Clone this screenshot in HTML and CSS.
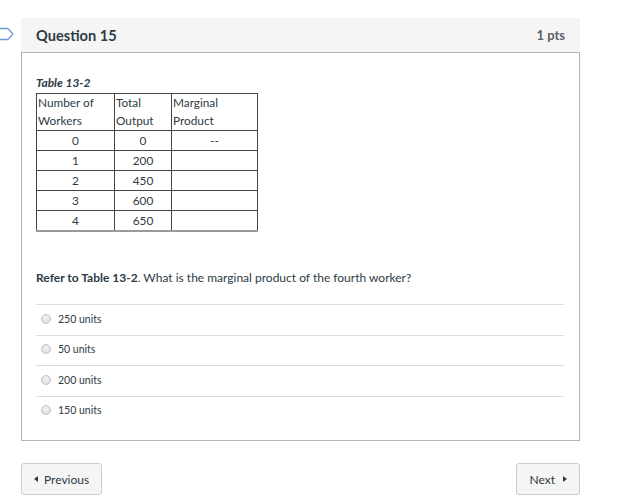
FILE: index.html
```html
<!DOCTYPE html>
<html>
<head>
<meta charset="utf-8">
<link rel="stylesheet" href="styles.css">
</head>
<body>
<div class="page">
  <svg class="flag" width="14" height="14" viewBox="0 0 14 14"><path d="M-6 1.5 H7 Q8 1.5 8.7 2.3 L12.3 6.2 Q13 7 12.3 7.8 L8.7 11.7 Q8 12.5 7 12.5 H-6" fill="none" stroke="#6b9bd6" stroke-width="1.3"/></svg>
  <div class="card">
    <div class="card-head">
      <span class="q-title">Question 15</span>
      <span class="q-pts">1 pts</span>
    </div>
    <div class="card-body">
      <div class="tbl-title">Table 13-2</div>
      <table class="data">
        <tr class="head"><td class="c1">Number of<br>Workers</td><td class="c2">Total<br>Output</td><td class="c3">Marginal<br>Product</td></tr>
        <tr><td>0</td><td>0</td><td>--</td></tr>
        <tr><td>1</td><td>200</td><td></td></tr>
        <tr><td>2</td><td>450</td><td></td></tr>
        <tr><td>3</td><td>600</td><td></td></tr>
        <tr><td>4</td><td>650</td><td></td></tr>
      </table>
      <p class="question"><b>Refer to Table 13-2</b>. What is the marginal product of the fourth worker?</p>
      <div class="answers">
        <div class="answer"><span class="radio"></span><span>250 units</span></div>
        <div class="answer"><span class="radio"></span><span>50 units</span></div>
        <div class="answer"><span class="radio"></span><span>200 units</span></div>
        <div class="answer"><span class="radio"></span><span>150 units</span></div>
      </div>
    </div>
  </div>
  <div class="nav">
    <button class="btn"><span class="tri-l"></span>Previous</button>
    <button class="btn">Next<span class="tri-r"></span></button>
  </div>
</div>
</body>
</html>
```
FILE: styles.css
```css
html, body { margin: 0; padding: 0; background: #fff; }
body { font-family: Lato, "Open Sans", sans-serif; color: #2d3b45; }
.page { position: relative; width: 559px; margin-left: 21px; padding-top: 18px; }
.flag { position: absolute; left: -21px; top: 27px; }
.card { border: 1px solid #b5b5b5; border-top: none; }
.card-head {
  height: 34px; background: #f5f5f5; border-bottom: 1px solid #b5b5b5;
  display: flex; align-items: center; justify-content: space-between;
  padding: 0 15px 0 15px; margin: 0 -1px 0 -1px;
}
.q-title { font-weight: 700; font-size: 14.6px; color: #2d3b45; }
.q-pts { font-weight: 700; font-size: 13px; color: #5a6268; }
.card-body { padding: 22px 15px 14px 14px; }
.tbl-title { font-style: italic; font-weight: 700; font-size: 12px; line-height: 16px; margin-bottom: 2px; color: #2d3b45; }
.data { border-collapse: collapse; font-size: 11.8px; color: #2d3b45; border-bottom: 2px solid #9a9a9a; }
.data td { border: 1px solid #444; height: 19px; padding: 0; text-align: center; line-height: 18px; }
.data tr.head td { text-align: left; vertical-align: top; height: 36px; padding: 0 0 0 1px; }
.data .c1 { width: 76px; }
.data .c2 { width: 55px; }
.data .c3 { width: 84px; }
.question { font-size: 12px; line-height: 16px; margin: 38px 0 0 0; color: #2d3b45; }
.answers { margin-top: 18px; }
.answer { border-top: 1px solid #dcdcdc; display: flex; align-items: center; padding-bottom: 2px; box-sizing: content-box; height: 27.5px; font-size: 10.5px; color: #2d3b45; }
.radio { width: 8px; height: 8px; border-radius: 50%; border: 1px solid #c3c3c3; background: radial-gradient(circle at 50% 35%, #f4f4f4, #d8d8d8); margin: 0 7px 0 5px; }
.nav { display: flex; justify-content: space-between; margin-top: 22px; }
.btn {
  font-family: Lato, "Open Sans", sans-serif; font-size: 12px; color: #2d3b45;
  background: #f5f5f5; border: 1px solid #c7cdd1; border-radius: 3px;
  height: 32px; padding: 0 12px; display: flex; align-items: center; gap: 6px;
}
.tri-l { width: 0; height: 0; border-top: 3px solid transparent; border-bottom: 3px solid transparent; border-right: 4px solid #2d3b45; }
.tri-r { width: 0; height: 0; border-top: 3px solid transparent; border-bottom: 3px solid transparent; border-left: 4px solid #2d3b45; margin-left: 2px; }
```
